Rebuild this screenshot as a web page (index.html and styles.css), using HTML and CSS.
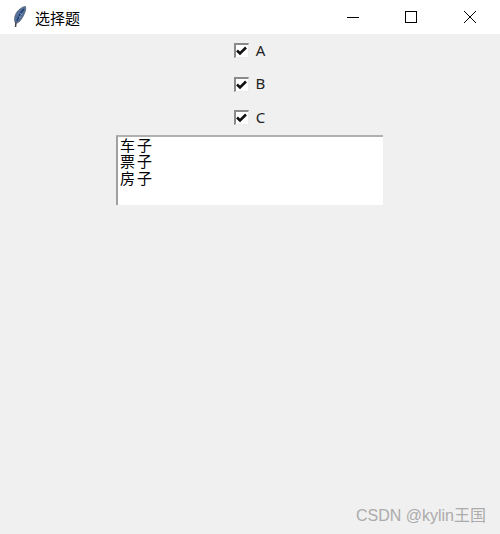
FILE: index.html
```html
<!DOCTYPE html>
<html lang="zh-CN">
<head>
    <meta charset="UTF-8">
    <title>选择题</title>
    <link rel="stylesheet" href="styles.css">
</head>
<body>
    <div class="window">
        <div class="titlebar">
            <svg class="feather" width="14" height="22" viewBox="0 0 14 22">
                <path d="M12.500 0.500 C8 1 3.500 5 2 10 C1.200 13 1.500 15.500 2.500 17 C3.500 17.500 5.500 16.500 7 15 C9.500 12 11.500 8 12.500 4.500 C12.800 3 12.800 1.500 12.500 0.500 Z" fill="#52719f" stroke="#5c6470" stroke-width="0.800"/>
                <path d="M11 3 C8 6 5.500 10 4 15" fill="none" stroke="#1d3560" stroke-width="1.200"/>
                <path d="M7 7 L9 9 M5.500 10 L7.500 11.500" stroke="#9fb6d6" stroke-width="0.700" fill="none"/>
                <path d="M3 16 L2.500 21" stroke="#444" stroke-width="1.500" fill="none"/>
            </svg>
            <span class="title">选择题</span>
            <div class="controls">
                <div class="control">
                    <svg width="12" height="12" viewBox="0 0 12 12"><path d="M0 6.500 H12" stroke="#000" stroke-width="1"/></svg>
                </div>
                <div class="control">
                    <svg width="12" height="12" viewBox="0 0 12 12"><rect x="0.500" y="0.500" width="11" height="11" fill="none" stroke="#000" stroke-width="1"/></svg>
                </div>
                <div class="control">
                    <svg width="14" height="14" viewBox="0 0 14 14"><path d="M1 1 L13 13 M13 1 L1 13" stroke="#000" stroke-width="1"/></svg>
                </div>
            </div>
        </div>

        <div class="content">
            <label class="option">
                <span class="box"><svg width="11" height="10" viewBox="0 0 11 10"><path d="M1 4.500 L4 7.500 L10 1.500" fill="none" stroke="#111" stroke-width="2.600"/></svg></span>
                <span class="option-text">A</span>
            </label>
            <label class="option">
                <span class="box"><svg width="11" height="10" viewBox="0 0 11 10"><path d="M1 4.500 L4 7.500 L10 1.500" fill="none" stroke="#111" stroke-width="2.600"/></svg></span>
                <span class="option-text">B</span>
            </label>
            <label class="option">
                <span class="box"><svg width="11" height="10" viewBox="0 0 11 10"><path d="M1 4.500 L4 7.500 L10 1.500" fill="none" stroke="#111" stroke-width="2.600"/></svg></span>
                <span class="option-text">C</span>
            </label>
            <div class="answers">
                <div>车子</div>
                <div>票子</div>
                <div>房子</div>
            </div>
        </div>

        <div class="watermark">CSDN @kylin王国</div>
    </div>
</body>
</html>
```

FILE: styles.css
```css
body {
    margin: 0;
    background: #f0f0f0;
    font-family: "Liberation Sans", "Noto Sans CJK SC", sans-serif;
}

.window {
    position: relative;
    height: 534px;
    overflow: hidden;
}

.titlebar {
    display: flex;
    align-items: center;
    height: 34px;
    padding: 0 1px 0 13px;
    background: #ffffff;
}

.feather {
    margin-right: 8px;
}

.title {
    font-size: 15px;
    color: #000000;
}

.controls {
    display: flex;
    margin-left: auto;
}

.control {
    display: flex;
    align-items: center;
    justify-content: center;
    width: 58.500px;
    height: 30px;
}

.content {
    display: flex;
    flex-direction: column;
    align-items: center;
    padding-right: 1px;
}

.option {
    display: flex;
    align-items: center;
    gap: 7px;
    height: 33.500px;
    font-family: "Noto Sans", sans-serif;
    font-size: 15px;
    color: #222222;
}

.option-text {
    margin-bottom: 2px;
}

.box {
    display: flex;
    align-items: center;
    justify-content: center;
    box-sizing: border-box;
    width: 15px;
    height: 15px;
    background: #ffffff;
    border-top: 2px solid #8a8a8a;
    border-left: 2px solid #8a8a8a;
    border-right: 1px solid #ececec;
    border-bottom: 1px solid #ececec;
}

.answers {
    box-sizing: border-box;
    width: 267px;
    height: 70px;
    padding-left: 2px;
    background: #ffffff;
    border-top: 2px solid #b0b0b0;
    border-left: 2px solid #a0a0a0;
    font-family: "Noto Sans CJK SC", sans-serif;
    font-size: 15px;
    line-height: 16.500px;
    letter-spacing: 2px;
    color: #000000;
}

.watermark {
    position: absolute;
    right: 14px;
    bottom: 8px;
    font-size: 16px;
    color: #ababab;
}
```
